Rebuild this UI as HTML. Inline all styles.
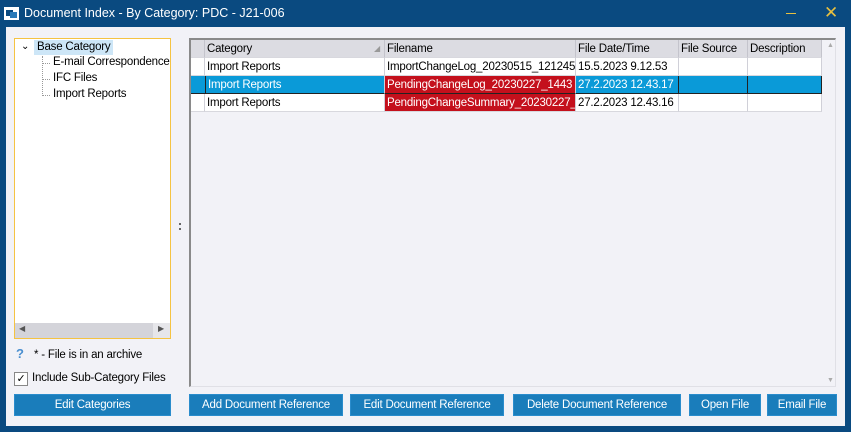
<!DOCTYPE html>
<html><head><style>
*{margin:0;padding:0;box-sizing:border-box}
body{width:851px;height:432px;background:#0a4a80;font-family:"Liberation Sans",Arial,sans-serif;font-size:11.5px;letter-spacing:-0.2px;color:#000;position:relative;overflow:hidden}
.a{position:absolute}
.title{left:24px;top:6px;color:#fff;font-size:12.5px;letter-spacing:0}
.client{left:6px;top:27px;width:839px;height:399px;background:#f2f2f7}
.tree{left:14px;top:38px;width:157px;height:301px;border:1px solid #f5c342;background:#fff}
.btn{position:absolute;top:394px;height:22px;background:#1a7dbb;color:#fff;text-align:center;line-height:21px;font-size:11.5px;border:1px solid #2a8ccc}
.grid{left:189px;top:38px;width:647px;height:349px;border-left:2px solid #8a8a8a;border-top:2px solid #8a8a8a;background:#f2f2f7;border-right:1px solid #e0e0e6;border-bottom:1px solid #e0e0e6}
.c{position:absolute;height:18px;line-height:18px;padding-left:2px;white-space:nowrap;overflow:hidden;border-right:1px solid #d0d0d8;border-bottom:1px solid #d8d8de}
.h{background:#dcdce2;border-right:1px solid #c4c4cc}
</style></head><body>
<svg class="a" style="left:4px;top:7px" width="15" height="13"><rect x="0" y="0" width="15" height="13" fill="#fff"/><rect x="2" y="3" width="7" height="6" fill="#0a4a80"/><rect x="6" y="5" width="7" height="6" fill="#2a7ab8"/></svg>
<div class="a title">Document Index - By Category: PDC - J21-006</div>
<div class="a" style="left:786px;top:13px;width:10px;height:1px;background:#e8c040"></div>
<div class="a" style="left:824px;top:3px;color:#e8c040;font-size:17px">✕</div>
<div class="a client"></div>
<div class="a tree">
 <div class="a" style="left:6px;top:2px;font-size:10px">⌄</div>
 <div class="a" style="left:19px;top:1px;background:#cde6f7;padding:0 3px;height:15px;line-height:15px">Base Category</div>
 <div class="a" style="left:27px;top:17px;width:1px;height:40px;border-left:1px dotted #999"></div>
 <div class="a" style="left:27px;top:24px;width:8px;border-top:1px dotted #999"></div>
 <div class="a" style="left:27px;top:40px;width:8px;border-top:1px dotted #999"></div>
 <div class="a" style="left:27px;top:56px;width:8px;border-top:1px dotted #999"></div>
 <div class="a" style="left:38px;top:17px;white-space:nowrap;width:118px;overflow:hidden">E-mail Correspondence</div>
 <div class="a" style="left:38px;top:33px">IFC Files</div>
 <div class="a" style="left:38px;top:49px">Import Reports</div>
 <div class="a" style="left:0;top:284px;width:155px;height:15px;background:#d4d4da"></div>
 <div class="a" style="left:138px;top:284px;width:17px;height:15px;background:#e6e6ea"></div>
 <div class="a" style="left:4px;top:285px;font-size:8px;color:#555">◀</div>
 <div class="a" style="left:143px;top:285px;font-size:8px;color:#555">▶</div>
</div>
<div class="a" style="left:16px;top:346px;color:#4a8fd0;font-weight:bold;font-size:13px">?</div>
<div class="a" style="left:34px;top:349px">* - File is in an archive</div>
<div class="a" style="left:14px;top:372px;width:14px;height:14px;border:1px solid #888;background:#fff;font-size:11px;line-height:12px;text-align:center">✓</div>
<div class="a" style="left:32px;top:372px">Include Sub-Category Files</div>
<div class="a" style="left:179px;top:223px;width:2px;height:7px;border-left:2px dotted #666"></div>
<div class="a grid">
 <div class="c h" style="left:0;top:0;width:14px"></div>
 <div class="c h" style="left:14px;top:0;width:180px">Category<span style="position:absolute;right:4px;font-size:8px;color:#999">◢</span></div>
 <div class="c h" style="left:194px;top:0;width:191px">Filename</div>
 <div class="c h" style="left:385px;top:0;width:103px">File Date/Time</div>
 <div class="c h" style="left:488px;top:0;width:69px">File Source</div>
 <div class="c h" style="left:557px;top:0;width:74px">Description</div>
 <div class="c" style="left:0;top:18px;width:14px;background:#fff"></div>
 <div class="c" style="left:14px;top:18px;width:180px;background:#fff">Import Reports</div>
 <div class="c" style="left:194px;top:18px;width:191px;background:#fff">ImportChangeLog_20230515_121245</div>
 <div class="c" style="left:385px;top:18px;width:103px;background:#fff">15.5.2023 9.12.53</div>
 <div class="c" style="left:488px;top:18px;width:69px;background:#fff"></div>
 <div class="c" style="left:557px;top:18px;width:74px;background:#fff"></div>
 <div class="a" style="left:0;top:36px;width:631px;height:18px;background:#0a9ad8;border-bottom:1px solid #222"></div>
 <div class="c" style="left:14px;top:36px;width:180px;color:#fff;border-left:1px solid #222;border-bottom:1px solid #222">Import Reports</div>
 <div class="c" style="left:194px;top:36px;width:191px;background:#c4101c;color:#fff;border-bottom:1px solid #222">PendingChangeLog_20230227_1443</div>
 <div class="c" style="left:385px;top:36px;width:103px;color:#fff;border-right:1px solid #222;border-bottom:1px solid #222">27.2.2023 12.43.17</div>
 <div class="c" style="left:488px;top:36px;width:69px;border-right:1px solid #222;border-bottom:1px solid #222"></div>
 <div class="c" style="left:557px;top:36px;width:74px;border-right:1px solid #222;border-bottom:1px solid #222"></div>
 <div class="c" style="left:0;top:54px;width:14px;background:#fff"></div>
 <div class="c" style="left:14px;top:54px;width:180px;background:#fff">Import Reports</div>
 <div class="c" style="left:194px;top:54px;width:191px;background:#c4101c;color:#fff">PendingChangeSummary_20230227_</div>
 <div class="c" style="left:385px;top:54px;width:103px;background:#fff">27.2.2023 12.43.16</div>
 <div class="c" style="left:488px;top:54px;width:69px;background:#fff"></div>
 <div class="c" style="left:557px;top:54px;width:74px;background:#fff"></div>
 <div class="a" style="left:636px;top:2px;font-size:7px;color:#aaa">▲</div>
 <div class="a" style="left:636px;top:337px;font-size:7px;color:#aaa">▼</div>
</div>
<div class="btn" style="left:14px;width:157px">Edit Categories</div>
<div class="btn" style="left:189px;width:154px">Add Document Reference</div>
<div class="btn" style="left:350px;width:154px">Edit Document Reference</div>
<div class="btn" style="left:513px;width:168px">Delete Document Reference</div>
<div class="btn" style="left:689px;width:72px">Open File</div>
<div class="btn" style="left:767px;width:70px">Email File</div>
</body></html>
